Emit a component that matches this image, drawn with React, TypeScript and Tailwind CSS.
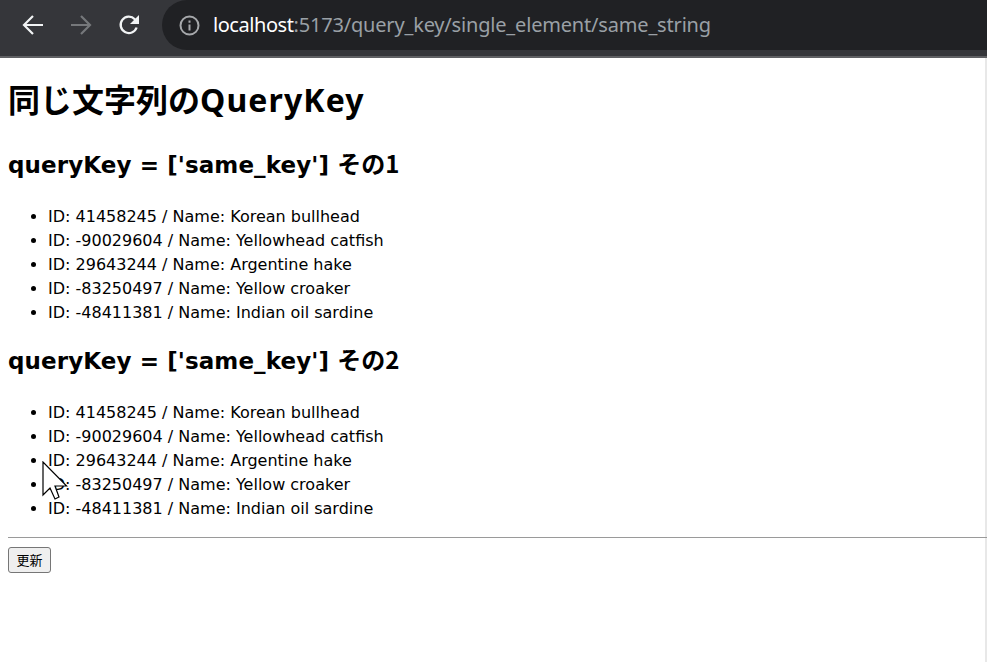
const fishes = [
  'ID: 41458245 / Name: Korean bullhead',
  'ID: -90029604 / Name: Yellowhead catfish',
  'ID: 29643244 / Name: Argentine hake',
  'ID: -83250497 / Name: Yellow croaker',
  'ID: -48411381 / Name: Indian oil sardine',
]

function FishList() {
  return (
    <ul className="mt-[23px] list-disc pl-10 text-[16px] leading-[24px] text-black [font-family:'DejaVu_Sans',sans-serif]">
      {fishes.map((f) => (
        <li key={f}>{f}</li>
      ))}
    </ul>
  )
}

function Toolbar() {
  return (
    <div className="flex h-[58px] border-b-2 border-[#5f6063] bg-[#35363a]">
      <div className="flex w-[162px] shrink-0 items-center pb-[6px] pl-[22px]">
        <svg width="22" height="22" viewBox="0 0 22 22" fill="none" stroke="#f1f3f4" strokeWidth="2.2">
          <path d="M21 11H2M11 2l-9 9 9 9" />
        </svg>
        <svg className="ml-[26px]" width="22" height="22" viewBox="0 0 22 22" fill="none" stroke="#76787b" strokeWidth="2.2">
          <path d="M1 11h19M11 2l9 9-9 9" />
        </svg>
        <svg className="ml-[26px]" width="22" height="22" viewBox="0 0 22 22" fill="none">
          <path d="M18.6 13.5A8.2 8.2 0 1 1 16.8 5.2L19.4 7.8" stroke="#f1f3f4" strokeWidth="2.3" />
          <path d="M21 1V10H12Z" fill="#f1f3f4" />
        </svg>
      </div>
      <div className="flex h-[50px] flex-1 items-center rounded-l-[25px] bg-[#202124] pl-[17px]">
        <svg width="21" height="21" viewBox="0 0 21 21" fill="none" stroke="#a6a8ab" strokeWidth="2">
          <circle cx="10.5" cy="10.5" r="9" />
          <path d="M10.5 9.5v6M10.5 5.5v2.2" />
        </svg>
        <div className="ml-[13px] text-[20px] tracking-[-0.18px] text-[#9aa0a6] [font-family:'Noto_Sans',sans-serif]">
          <span className="tracking-[-0.45px] text-white">localhost</span>:5173/query_key/single_element/same_string
        </div>
      </div>
    </div>
  )
}

export default function App() {
  return (
    <div className="relative h-[662px] w-[987px] overflow-hidden bg-white [font-family:'Noto_Sans_CJK_JP',sans-serif]">
      <Toolbar />
      <div className="h-[604px] border-r-2 border-[#e8e8e8] px-2 pt-[18px] pb-2">
        <h1 className="text-[32px] leading-[44px] font-bold text-black">
          同じ文字列の<span className="tracking-[1.1px] [font-family:'Noto_Sans',sans-serif]">QueryKey</span>
        </h1>
        <h2 className="mt-[24px] text-[24px] leading-[33px] font-bold text-black">
          <span className="text-[23px] tracking-[0.1px] [font-family:'DejaVu_Sans',sans-serif]">queryKey = ['same_key'] </span>その1
        </h2>
        <FishList />
        <h2 className="mt-[17px] text-[24px] leading-[33px] font-bold text-black">
          <span className="text-[23px] tracking-[0.1px] [font-family:'DejaVu_Sans',sans-serif]">queryKey = ['same_key'] </span>その2
        </h2>
        <FishList />
        <hr className="mt-[16px] mr-[-10px] border-t border-[#9a9a9a]" />
        <button className="mt-[9px] flex h-[26px] w-[43px] items-center justify-center rounded-[3px] border border-[#767676] bg-[#efefef] text-[13px] text-black">
          更新
        </button>
      </div>
      <svg className="absolute top-[461px] left-[42px]" width="26" height="40" viewBox="0 0 26 40">
        <path d="M1 1V34L8 27L13 38L17 36L13 25H24.7Z" fill="white" stroke="black" strokeWidth="1.2" />
      </svg>
    </div>
  )
}
